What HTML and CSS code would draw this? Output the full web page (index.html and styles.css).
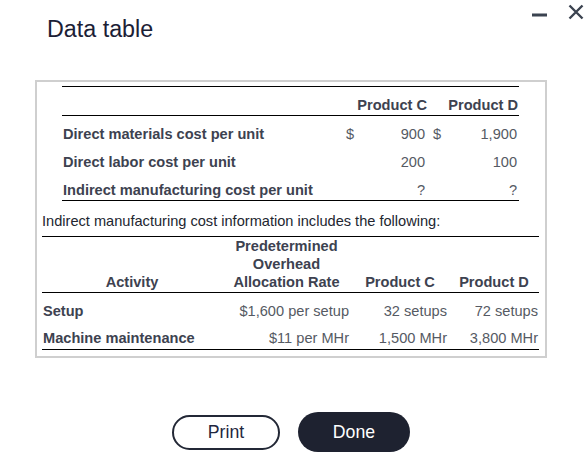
FILE: index.html
```html
<!DOCTYPE html>
<html lang="en">
<head>
<meta charset="utf-8">
<title>Data table</title>
<link rel="stylesheet" href="styles.css">
</head>
<body>
<div class="titlebar">
  <h1 class="title">Data table</h1>
  <div class="controls">
    <svg class="icon" width="16" height="16" viewBox="0 0 16 16" aria-label="Minimize"><rect x="0" y="9.5" width="15" height="3" fill="#3b4350"/></svg>
    <svg class="icon" width="16" height="16" viewBox="0 0 16 16" aria-label="Close"><path d="M1.5 1.5 L14.5 14.5 M14.5 1.5 L1.5 14.5" stroke="#3b4350" stroke-width="2.4" stroke-linecap="butt" fill="none"/></svg>
  </div>
</div>

<div class="panel">
  <table class="cost">
    <colgroup>
      <col class="c-label"><col class="c-cur"><col class="c-valc"><col class="c-cur"><col class="c-vald">
    </colgroup>
    <thead>
      <tr><th></th><th colspan="2" class="h-c">Product C</th><th colspan="2" class="h-d">Product D</th></tr>
    </thead>
    <tbody>
      <tr class="first"><td class="label">Direct materials cost per unit</td><td class="cur">$</td><td class="num pc">900</td><td class="cur cur-d">$</td><td class="num pd">1,900</td></tr>
      <tr><td class="label">Direct labor cost per unit</td><td class="cur"></td><td class="num pc">200</td><td class="cur cur-d"></td><td class="num pd">100</td></tr>
      <tr class="last"><td class="label">Indirect manufacturing cost per unit</td><td class="cur"></td><td class="num pc">?</td><td class="cur cur-d"></td><td class="num pd">?</td></tr>
    </tbody>
  </table>

  <p class="intro">Indirect manufacturing cost information includes the following:</p>

  <table class="activity">
    <colgroup>
      <col class="a-act"><col class="a-rate"><col class="a-c"><col class="a-d">
    </colgroup>
    <thead>
      <tr><th>Activity</th><th>Predetermined<br>Overhead<br>Allocation Rate</th><th>Product C</th><th>Product D</th></tr>
    </thead>
    <tbody>
      <tr><td class="label">Setup</td><td class="num">$1,600 per setup</td><td class="num">32 setups</td><td class="num">72 setups</td></tr>
      <tr class="last"><td class="label">Machine maintenance</td><td class="num">$11 per MHr</td><td class="num">1,500 MHr</td><td class="num">3,800 MHr</td></tr>
    </tbody>
  </table>
</div>

<div class="actions">
  <button class="btn btn-outline">Print</button>
  <button class="btn btn-solid">Done</button>
</div>
</body>
</html>
```

FILE: styles.css
```css
* { box-sizing: border-box; }

html, body {
  margin: 0;
  padding: 0;
  background: #ffffff;
  font-family: "Liberation Sans", Arial, sans-serif;
}

body {
  width: 587px;
  height: 471px;
  overflow: hidden;
}

.titlebar {
  display: flex;
  justify-content: space-between;
  align-items: flex-start;
  padding: 0 3px 0 47px;
}

.title {
  margin: 0;
  padding-top: 16px;
  font-size: 23.3px;
  line-height: 27px;
  font-weight: normal;
  color: #1b2035;
}

.controls {
  display: flex;
  gap: 20px;
  padding-top: 4px;
}

.icon { display: block; }

.panel {
  width: 512px;
  margin: 37px 0 0 35px;
  border: 2px solid #cfcfcf;
  padding: 4px 6px 6px 5px;
}

table {
  border-collapse: separate;
  border-spacing: 0;
  table-layout: fixed;
  font-size: 14.6px;
}

th {
  font-weight: bold;
  color: #3d4250;
  border-top: 1px solid #000;
  border-bottom: 1px solid #000;
  vertical-align: bottom;
}

td {
  line-height: 16px;
  padding: 10px 0 2px 0;
  vertical-align: top;
}

tr.last td { border-bottom: 1px solid #000; }

.label {
  font-weight: bold;
  color: #3d4250;
  padding-left: 1px;
  white-space: nowrap;
}

.num {
  text-align: right;
  color: #555a63;
  white-space: nowrap;
}

/* top cost table */
.cost {
  width: 457px;
  margin-left: 20px;
}

.c-label { width: 281px; }
.c-cur { width: 17px; }
.c-valc { width: 68px; }
.c-vald { width: 74px; }

.cost th {
  line-height: 16px;
  padding: 10px 0 2px 0;
  text-align: right;
}

.cost th.h-c { padding-right: 1px; }
.cost th.h-d { padding-right: 1px; }

.cost .cur {
  color: #555a63;
  padding-left: 3px;
}

.cost .cur-d { padding-left: 5px; }

.cost .pc { padding-right: 3px; }
.cost .pd { padding-right: 2px; }

.intro {
  margin: 12px 0 7px 0;
  font-size: 14.6px;
  line-height: 16px;
  color: #222630;
}

/* activity table */
.activity { width: 497px; }

.a-act { width: 180px; }
.a-rate { width: 129px; }
.a-c { width: 98px; }
.a-d { width: 90px; }

.activity th {
  line-height: 18px;
  padding: 0 0 1px 0;
  text-align: center;
}

.activity td { padding: 10px 2px 1px 1px; }
.activity tr.last td { padding-bottom: 3px; }
.activity td.num:last-child { padding-right: 1px; }

/* buttons */
.actions {
  display: flex;
  justify-content: center;
  align-items: center;
  gap: 18px;
  margin-top: 54px;
  padding-right: 5px;
}

.btn {
  font-family: "Liberation Sans", Arial, sans-serif;
  font-size: 17.7px;
  border-radius: 999px;
  cursor: pointer;
  padding: 0;
}

.btn-outline {
  width: 108px;
  height: 35px;
  background: #ffffff;
  color: #1f2740;
  border: 2px solid #232836;
}

.btn-solid {
  width: 112px;
  height: 40px;
  background: #1e2230;
  color: #ffffff;
  border: none;
}
```
